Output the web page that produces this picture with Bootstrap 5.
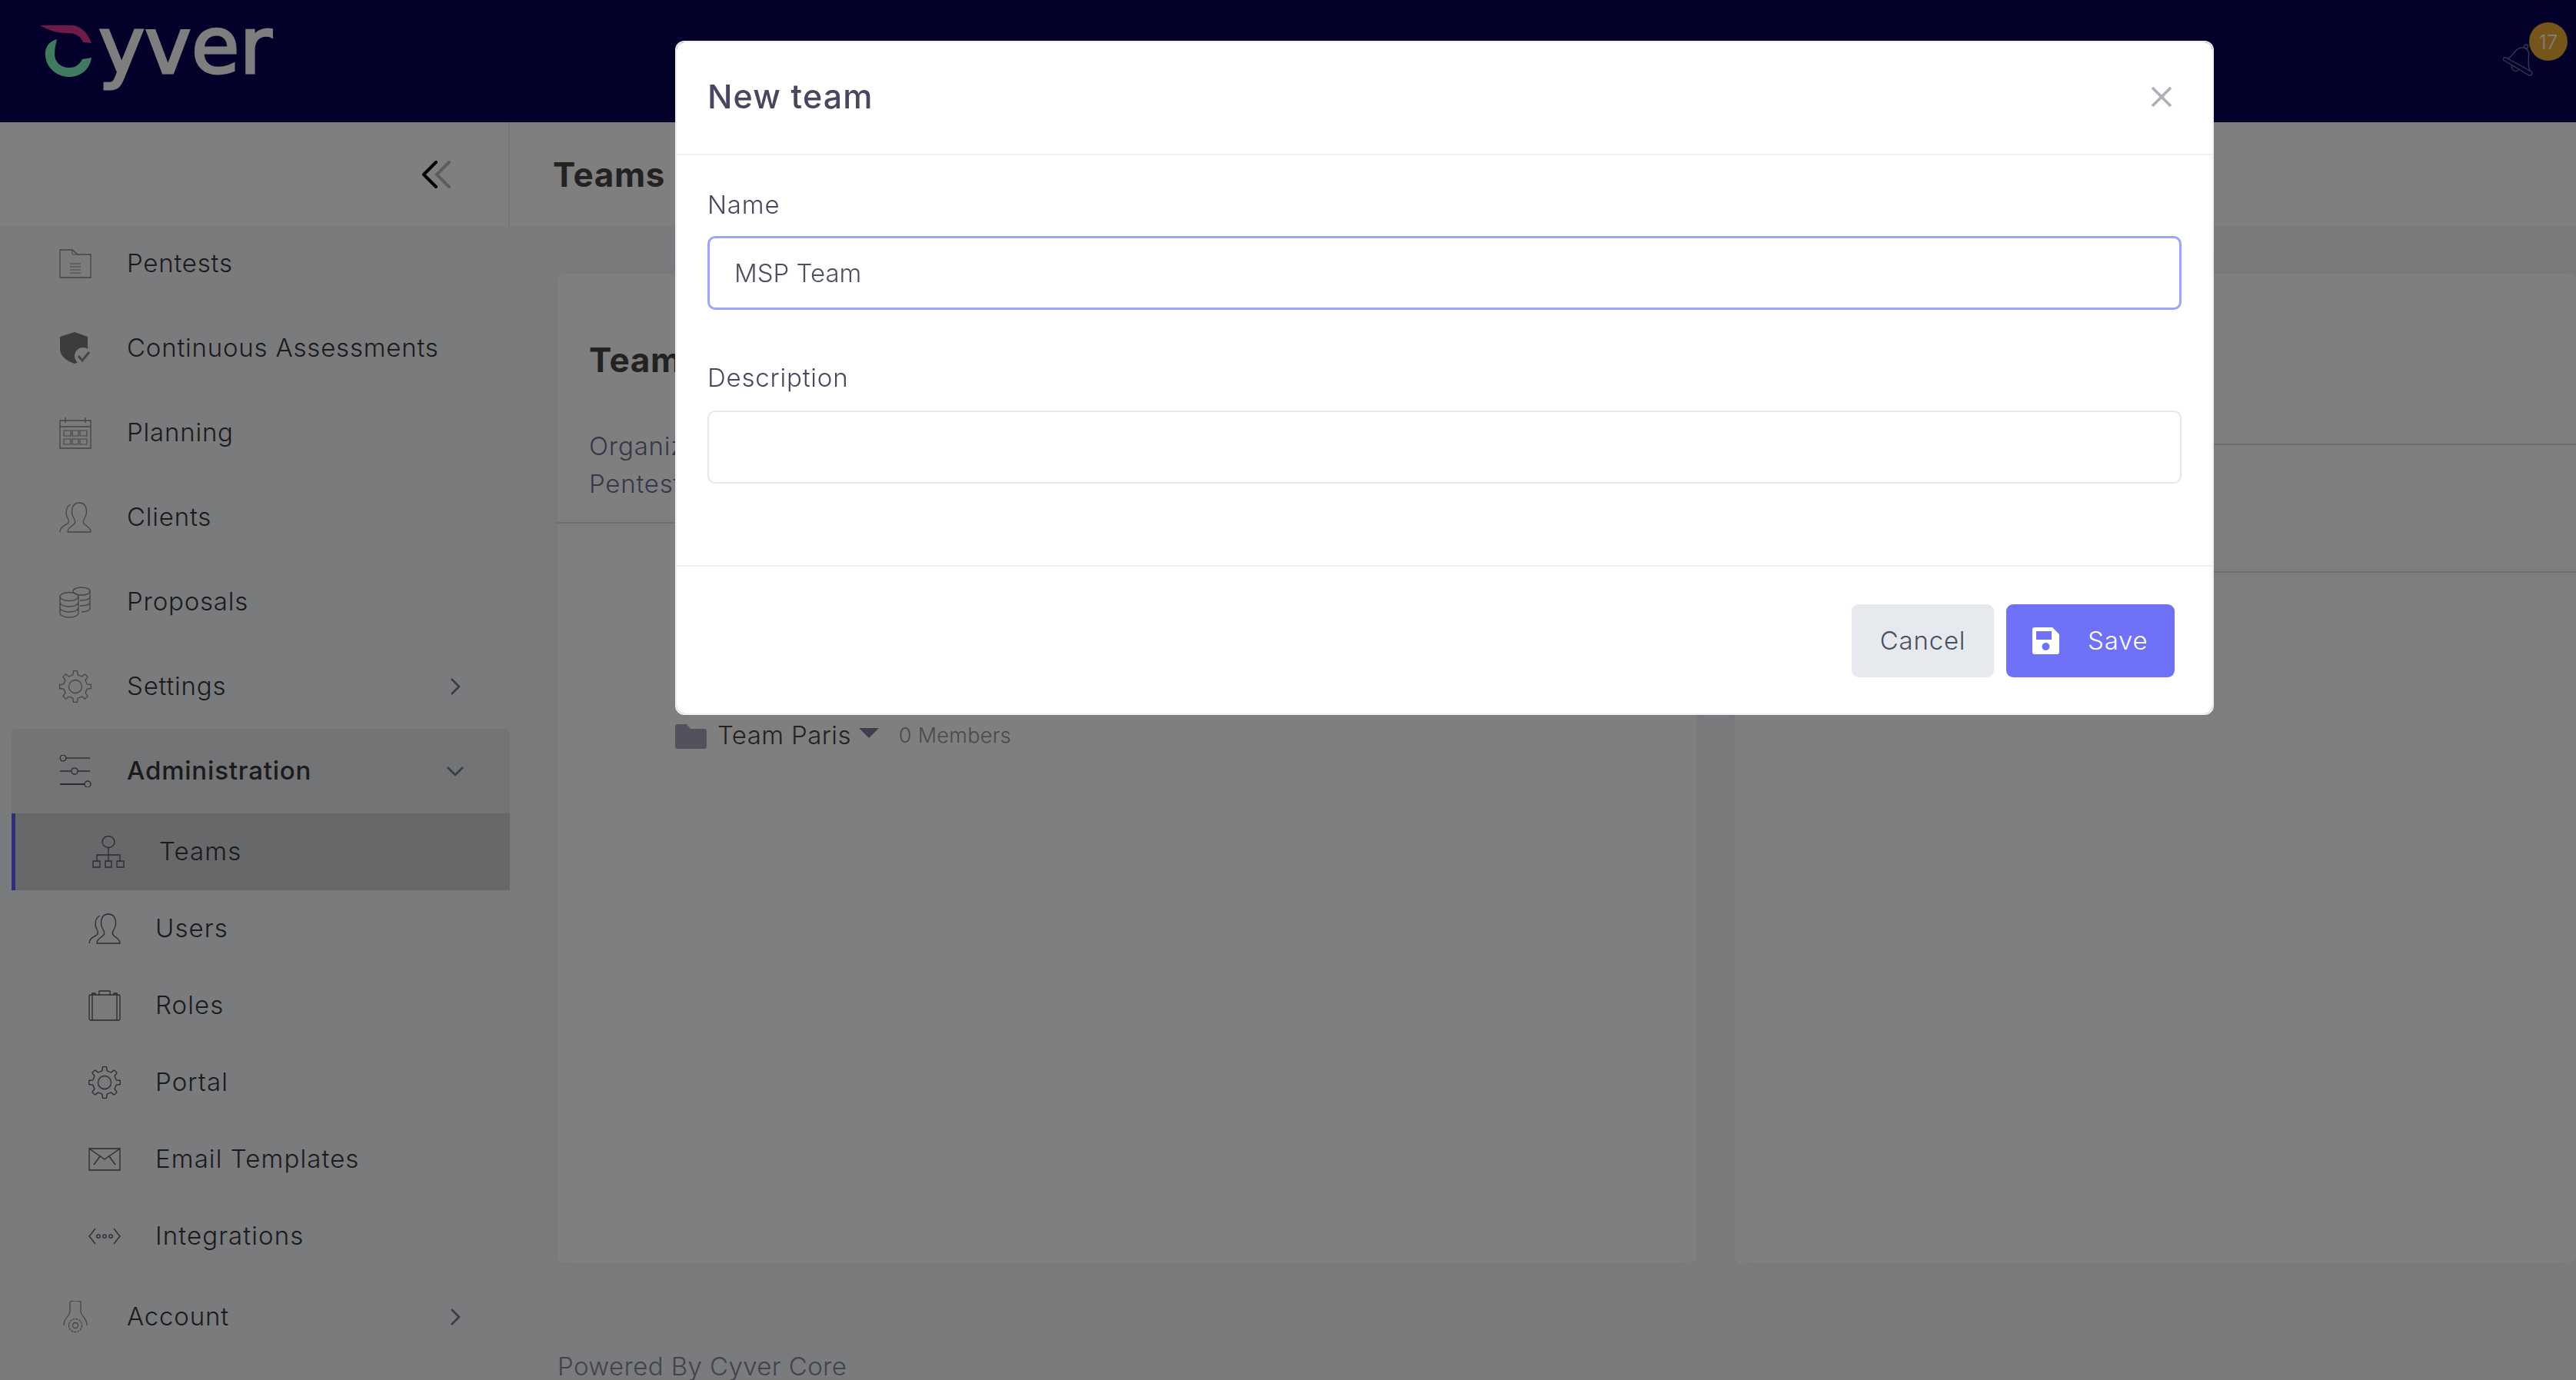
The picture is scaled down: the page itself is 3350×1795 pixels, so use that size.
<!DOCTYPE html>
<html lang="en">
<head>
    <meta charset="UTF-8">
    <title>Teams</title>
    <link href="https://cdn.jsdelivr.net/npm/bootstrap@5.3.0/dist/css/bootstrap.min.css" rel="stylesheet">
    <style>
        body { background: #f5f6fa; font-family: "Inter", "Liberation Sans", sans-serif; font-size: 33px; font-weight: 300; letter-spacing: .8px; color: #36363c; height: 1795px; overflow: hidden; }
        .topbar { height: 159px; background: #060254; padding: 0 11px 0 52px; }
        .brand { color: #fcfcff; font-family: "DejaVu Sans", sans-serif; font-size: 102px; font-weight: 400; line-height: 1; letter-spacing: 0; -webkit-text-stroke: 3px #fcfcff; margin-left: 6px; margin-top: 9px; }
        .brand-mark { width: 70px; height: 70px; margin-top: 32px; }
        .bell-wrap { width: 84px; height: 70px; margin-top: -31px; }
        .bell-wrap svg { position: absolute; left: 0; top: 28px; width: 40px; height: 42px; color: #78789f; }
        .notif { position: absolute; right: 0; top: 0; width: 50px; height: 50px; background: #eaaa34; color: #fff; font-size: 26px; letter-spacing: 0; }
        .subbar { height: 135px; background: #fff; }
        .collapse-cell { width: 663px; height: 100%; border-right: 2px solid #eceef2; padding-right: 74px; }
        .collapse-cell svg { width: 40px; height: 36px; }
        .page-title { font-size: 44px; font-weight: 700; letter-spacing: .6px; color: #444; margin-left: 56px; }
        .sidebar { width: 663px; padding-left: 15px; margin-top: -6px; flex-shrink: 0; }
        .sidebar .nav-link { height: 110px; padding: 0 59px 0 62px; color: #36363c; gap: 46px; }
        .sidebar svg.ico { width: 42px; height: 42px; flex-shrink: 0; color: #8a8a90; fill: none; stroke: currentColor; stroke-width: 1.3; }
        .sidebar .arrow { width: 24px; height: 24px; margin-left: auto; color: #747694; fill: none; stroke: currentColor; stroke-width: 2.6; }
        .sidebar .open > .nav-link { background: #e6e8ec; font-weight: 500; border-radius: 6px 6px 0 0; }
        .sidebar .open svg.ico { color: #55555c; }
        .sidebar .sub .nav-link { height: 100px; padding-left: 100px; gap: 45px; font-weight: 300; letter-spacing: 1.1px; }
        .sidebar .sub svg.ico { color: #55555c; }
        .sidebar .sub .nav-link.active { background: #ced0d4; border-left: 5px solid #5e60ee; color: #36363c; }
        .content { padding: 62px 0 0 62px; }
        .panels { gap: 50px; }
        .panel { height: 1287px; border: 0; border-radius: 8px; box-shadow: 0 0 40px rgba(0, 0, 0, .03); }
        .panel-left { width: 1481px; flex-shrink: 0; }
        .panel-left .card-header { height: 325px; padding: 88px 41px 0; background: transparent; border-bottom: 2px solid #dddfe4; }
        .panel-title { font-size: 44px; font-weight: 700; letter-spacing: .6px; color: #444; margin-bottom: 64px; line-height: 48px; }
        .panel-note { color: #6c6e98; line-height: 49px; }
        .tree-row { padding: 251px 0 0 153px; color: #444; gap: 14px; letter-spacing: .4px; }
        .tree-row svg { width: 41px; height: 32px; color: #a4a5bd; margin-top: 2px; }
        .tree-row .dropdown-toggle::after { margin-left: 10px; border-top-width: .4em; border-right-width: .4em; border-left-width: .4em; color: #7c7d98; }
        .members { font-size: 27px; letter-spacing: .3px; color: #959595; margin-left: 12px; }
        .panel-right .sec-a { height: 223px; border-bottom: 2px solid #dddfe4; }
        .panel-right .sec-b { height: 166px; border-bottom: 2px solid #dddfe4; }
        .footer-line { margin-top: 110px; color: #84869e; letter-spacing: .4px; }
        .modal-dialog.team-dialog { max-width: none; width: 2001px; margin: 53px 0 0 878px; }
        .team-dialog .modal-content { border: 2px solid #eeeef4; border-radius: 12px; height: 877px; color: #474760; }
        .team-dialog .modal-header { height: 147px; padding: 0 40px 4px; border-bottom: 2px solid #eeeef4; }
        .team-dialog .modal-title { font-size: 43px; font-weight: 500; letter-spacing: 1.1px; color: #474760; }
        .team-dialog .btn-close { width: 28px; height: 28px; padding: 0; margin: 0 12px 0 auto; background: none; opacity: 1; }
        .team-dialog .btn-close svg { display: block; width: 28px; height: 28px; }
        .team-dialog .modal-body { padding: 40px 40px 0; flex: 0 0 auto; height: 533px; }
        .team-dialog .form-label { font-size: 33px; line-height: 48px; margin-bottom: 17px; font-weight: 300; display: block; }
        .team-dialog .desc-label { margin-bottom: 19px; }
        .team-dialog .form-control { height: 95px; border: 2px solid #e6e6f0; border-radius: 10px; font-size: 33px; font-weight: 300; letter-spacing: 0; color: #4b4f5e; padding: 0 32px; }
        .team-dialog .form-control.focused { height: 96px; border: 3px solid #9ba6fb; }
        .team-dialog .mb-field { margin-bottom: 64px; }
        .team-dialog .modal-footer { height: 193px; padding: 49px 49px 0 0; border-top: 2px solid #eeeef4; gap: 16px; align-items: flex-start; }
        .team-dialog .modal-footer .btn { height: 95px; margin: 0; font-size: 33px; font-weight: 300; letter-spacing: .8px; border: 0; border-radius: 9px; }
        .btn-cancel { width: 185px; background: #e6e9ee; color: #4b4f5e; }
        .btn-save { width: 219px; background: #6f72f7; color: #fff; gap: 37px; padding: 0 0 0 34px; }
        .btn-save svg { width: 35px; height: 35px; }
    </style>
</head>
<body>
<svg width="0" height="0" class="d-none">
    <symbol id="i-gear" viewBox="0 0 42 42">
        <path stroke-linejoin="round" d="M17.78 5.84L18.5 .65H23.5L24.22 5.84L29.44 8L33.62 4.85L37.15 8.38L34 12.56L36.16 17.78L41.35 18.5V23.5L36.16 24.22L34 29.44L37.15 33.62L33.62 37.15L29.44 34L24.22 36.16L23.5 41.35H18.5L17.78 36.16L12.56 34L8.38 37.15L4.85 33.62L8 29.44L5.84 24.22L.65 23.5V18.5L5.84 17.78L8 12.56L4.85 8.38L8.38 4.85L12.56 8Z"/>
        <circle cx="21" cy="21" r="8.5"/>
    </symbol>
    <symbol id="i-users" viewBox="0 0 42 42">
        <path stroke-linejoin="round" d="M1 40C1 34 6 32 11 29C13 27 13 25 11 22C8 17 8 7 15 4"/>
        <path stroke-linejoin="round" d="M11 40H41C41 34 36 33 33 30C31 28 31 25 33 22C37 16 37 2 26 2C15 2 15 16 19 22C21 25 21 28 19 30C16 33 11 34 11 40Z"/>
    </symbol>
</svg>

<nav class="topbar d-flex align-items-center justify-content-between">
    <div class="d-flex align-items-start h-100">
        <svg class="brand-mark" viewBox="52 32 70 70">
            <path fill="#dc3494" d="M52 33H92Q110 33 119 56L108 55Q103 43 88 43Q68 43 52 33Z"/>
            <path fill="#82f4c0" d="M74 51C62 54 58 64 59 72C60 90 76 100 90 100C105 100 117 90 119 75L107 77C103 85 97 88 90 88C78 88 71 80 71 70C71 62 73 56 74 51Z"/>
        </svg>
        <span class="brand">yver</span>
    </div>
    <div class="bell-wrap position-relative">
        <svg viewBox="0 0 40 42" fill="none" stroke="currentColor" stroke-width="1.3" stroke-linejoin="round">
            <path d="M2 22L34 41Q37 42 38 38Q38 37 37 36L4 18Q1 17 0 20Q0 21 2 22Z"/>
            <path d="M6 20C13 16 14 10 19 7C25 3 31 5 33 10C35 16 31 24 35 36"/>
            <path d="M12 28C10 35 18 38 21 33"/>
            <circle cx="30" cy="3.5" r="2.6"/>
        </svg>
        <span class="notif rounded-circle d-flex align-items-center justify-content-center">17</span>
    </div>
</nav>

<div class="subbar d-flex align-items-center">
    <div class="collapse-cell d-flex align-items-center justify-content-end">
        <svg viewBox="0 0 40 36" fill="none" stroke-width="4" stroke-linecap="round" stroke-linejoin="round">
            <path stroke="#bbb" d="M37 2L21 18L37 34"/>
            <path stroke="#000" d="M20 2L4 18L20 34"/>
        </svg>
    </div>
    <div class="page-title">Teams</div>
</div>

<div class="d-flex">
    <aside class="sidebar">
        <ul class="nav flex-column">
            <li class="nav-item"><a class="nav-link d-flex align-items-center" href="#">
                <svg class="ico" viewBox="0 0 42 42"><path d="M1 39V3H17L24 9H41V39Z"/><path d="M17 3V9H24M14 21H28M14 25H28M14 29H28M14 33H28" stroke-width="1"/></svg>Pentests</a></li>
            <li class="nav-item"><a class="nav-link d-flex align-items-center" href="#">
                <svg class="ico" viewBox="0 0 42 42"><path fill="#787878" stroke="none" d="M20 0L37 6V24C37 32 28 38 20 41C11 38 1 32 1 22V6Z"/><circle cx="31" cy="31" r="11" fill="#f5f6fa" stroke="none"/><path d="M25 31L30 37L39 26" stroke="#8a8a8a" stroke-width="3"/></svg>Continuous Assessments</a></li>
            <li class="nav-item"><a class="nav-link d-flex align-items-center" href="#">
                <svg class="ico" viewBox="0 0 42 42"><path d="M1 5H41V41H1ZM1 13H41M8 1V8M34 1V8"/><path d="M6 18H15V25H6ZM17 18H25V25H17ZM27 18H36V25H27ZM6 29H15V36H6ZM17 29H25V36H17ZM27 29H36V36H27Z" stroke-width="1.1"/></svg>Planning</a></li>
            <li class="nav-item"><a class="nav-link d-flex align-items-center" href="#">
                <svg class="ico"><use href="#i-users"/></svg>Clients</a></li>
            <li class="nav-item"><a class="nav-link d-flex align-items-center" href="#">
                <svg class="ico" viewBox="0 0 42 42" stroke-width="1"><ellipse cx="29" cy="7" rx="11" ry="5"/><path d="M40 7V29C40 32 35 34 29 34M40 14C40 17 35 19 27 19M40 21C40 24 35 26 27 26"/><ellipse cx="13" cy="14" rx="12" ry="5.5"/><path d="M1 14V35C1 39 7 41 13 41C19 41 25 39 25 35V14M1 21C1 25 7 27 13 27C19 27 25 25 25 21M1 28C1 32 7 34 13 34C19 34 25 32 25 28"/></svg>Proposals</a></li>
            <li class="nav-item"><a class="nav-link d-flex align-items-center" href="#">
                <svg class="ico"><use href="#i-gear"/></svg>Settings
                <svg class="arrow" viewBox="0 0 24 24"><path d="M7 2L17 12L7 22"/></svg></a></li>
            <li class="nav-item open">
                <a class="nav-link d-flex align-items-center" href="#">
                    <svg class="ico" viewBox="0 0 42 42"><circle cx="5" cy="4" r="3.8"/><path d="M9 4H40"/><path d="M1 21H15M24 21H40"/><circle cx="20" cy="21" r="4.2"/><path d="M1 38H33" stroke-width="2"/><circle cx="37" cy="38" r="4"/></svg>Administration
                    <svg class="arrow" viewBox="0 0 24 24"><path d="M2 7L12 17L22 7"/></svg></a>
                <ul class="nav flex-column sub">
                    <li class="nav-item"><a class="nav-link active d-flex align-items-center" href="#">
                        <svg class="ico" viewBox="0 0 42 42"><ellipse cx="21" cy="8" rx="8" ry="7.5"/><path d="M21 16V25M6 33V25H36V33M21 25V33"/><path d="M1 33H10V41H1ZM17 33H25V41H17ZM32 33H41V41H32Z"/></svg>Teams</a></li>
                    <li class="nav-item"><a class="nav-link d-flex align-items-center" href="#">
                        <svg class="ico"><use href="#i-users"/></svg>Users</a></li>
                    <li class="nav-item"><a class="nav-link d-flex align-items-center" href="#">
                        <svg class="ico" viewBox="0 0 42 42"><rect x="1" y="7" width="40" height="33" rx="2"/><path d="M14 7V2H28V7M5 7V40M37 7V40M5 7V5H9V7M33 7V5H37V7"/></svg>Roles</a></li>
                    <li class="nav-item"><a class="nav-link d-flex align-items-center" href="#">
                        <svg class="ico"><use href="#i-gear"/></svg>Portal</a></li>
                    <li class="nav-item"><a class="nav-link d-flex align-items-center" href="#">
                        <svg class="ico" viewBox="0 0 42 42"><path d="M1 7H41V35H1Z"/><path d="M1 7L21 21L41 7M7 28L15 17M35 28L27 17"/></svg>Email Templates</a></li>
                    <li class="nav-item"><a class="nav-link d-flex align-items-center" href="#">
                        <svg class="ico" viewBox="0 0 42 42"><path d="M9 11L1 21L9 31M33 11L41 21L33 31"/><circle cx="13" cy="21" r="2.2"/><circle cx="21" cy="21" r="2.2"/><circle cx="29" cy="21" r="2.2"/></svg>Integrations</a></li>
                </ul>
            </li>
            <li class="nav-item"><a class="nav-link d-flex align-items-center" href="#">
                <svg class="ico" viewBox="0 0 42 42" stroke-width="1"><path d="M14 2C14 -1 28 -1 28 2V14C28 20 36 21 36 32M14 2V14C14 20 6 21 6 32"/><circle cx="21" cy="32" r="8.5" stroke-dasharray="3 1"/><circle cx="21" cy="32" r="3.5"/></svg>Account
                <svg class="arrow" viewBox="0 0 24 24"><path d="M7 2L17 12L7 22"/></svg></a></li>
        </ul>
    </aside>

    <main class="content flex-grow-1">
        <div class="d-flex panels">
            <section class="card panel panel-left">
                <div class="card-header">
                    <div class="panel-title">Teams</div>
                    <div class="panel-note">Organize<br>Pentesters</div>
                </div>
                <div class="tree-row d-flex align-items-center">
                    <svg viewBox="0 0 41 32" fill="currentColor"><path d="M0 3Q0 0 3 0H15L20 6H38Q41 6 41 9V29Q41 32 38 32H3Q0 32 0 29Z"/></svg>
                    <span class="dropdown-toggle">Team Paris</span>
                    <span class="members">0 Members</span>
                </div>
            </section>
            <section class="card panel panel-right flex-grow-1">
                <div class="sec-a"></div>
                <div class="sec-b"></div>
            </section>
        </div>
        <div class="footer-line">Powered By Cyver Core</div>
    </main>
</div>

<div class="modal-backdrop show"></div>
<div class="modal d-block" tabindex="-1">
    <div class="modal-dialog team-dialog">
        <div class="modal-content">
            <div class="modal-header">
                <h5 class="modal-title">New team</h5>
                <button type="button" class="btn-close" aria-label="Close"><svg viewBox="0 0 28 28" fill="none" stroke="#b0b1b6" stroke-width="3.8"><path d="M2 2L26 26M26 2L2 26"/></svg></button>
            </div>
            <div class="modal-body">
                <div class="mb-field">
                    <label class="form-label" for="teamName">Name</label>
                    <input class="form-control focused" id="teamName" type="text" value="MSP Team">
                </div>
                <div>
                    <label class="form-label desc-label" for="teamDesc">Description</label>
                    <input class="form-control" id="teamDesc" type="text">
                </div>
            </div>
            <div class="modal-footer">
                <button type="button" class="btn btn-cancel">Cancel</button>
                <button type="button" class="btn btn-save d-flex align-items-center">
                    <svg viewBox="0 0 35 35"><path fill="#fff" fill-rule="evenodd" d="M3 0H26L35 9V32Q35 35 32 35H3Q0 35 0 32V3Q0 0 3 0ZM5 5V16H25V5ZM17.5 20A5 5 0 1 0 17.5 30A5 5 0 1 0 17.5 20Z"/></svg>
                    Save
                </button>
            </div>
        </div>
    </div>
</div>

<script src="https://cdn.jsdelivr.net/npm/bootstrap@5.3.0/dist/js/bootstrap.bundle.min.js"></script>
</body>
</html>
